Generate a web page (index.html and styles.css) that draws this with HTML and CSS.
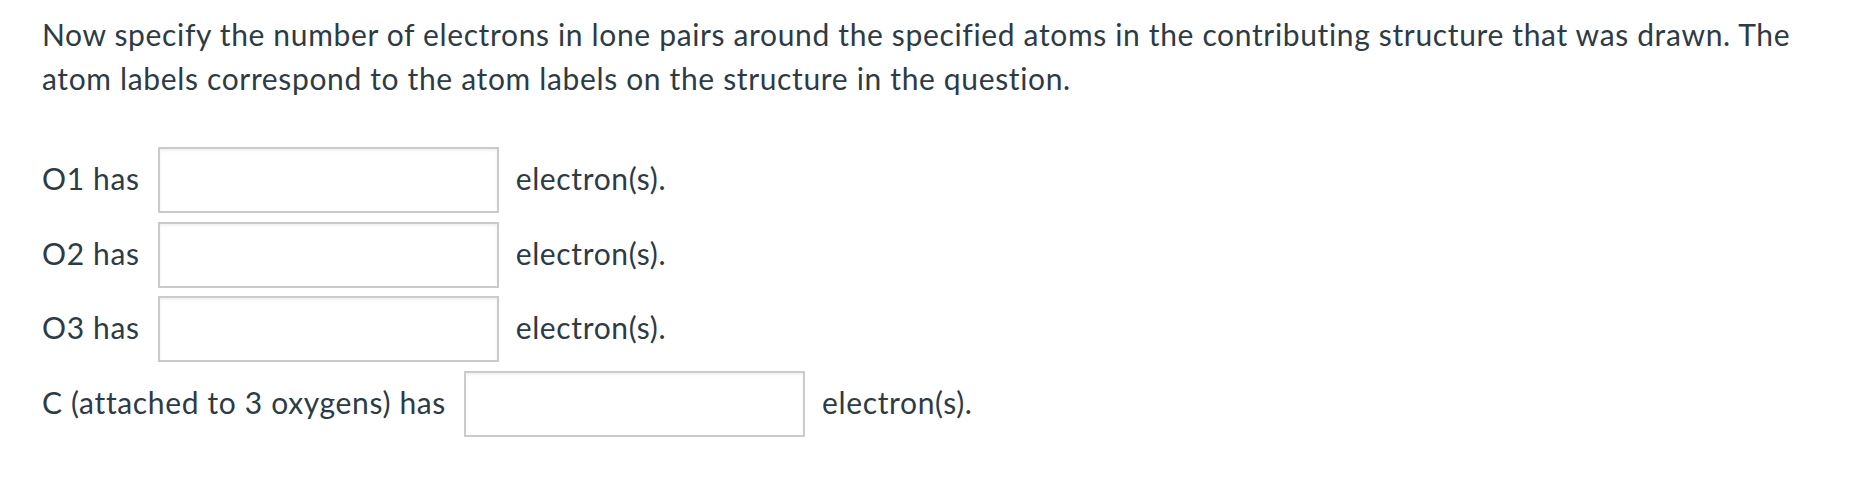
FILE: index.html
```html
<!DOCTYPE html>
<html lang="en">
<head>
<meta charset="utf-8">
<title>Lone pairs</title>
<link rel="stylesheet" href="styles.css">
</head>
<body>
<div class="question">
  <p class="prompt">Now specify the number of electrons in lone pairs around the specified atoms in the contributing structure that was drawn. The atom labels correspond to the atom labels on the structure in the question.</p>
  <div class="rows">
    <div class="row"><span class="label">O1 has</span><input class="answer" type="text"><span class="unit">electron(s).</span></div>
    <div class="row"><span class="label">O2 has</span><input class="answer" type="text"><span class="unit">electron(s).</span></div>
    <div class="row"><span class="label">O3 has</span><input class="answer" type="text"><span class="unit">electron(s).</span></div>
    <div class="row"><span class="label">C (attached to 3 oxygens) has</span><input class="answer" type="text"><span class="unit">electron(s).</span></div>
  </div>
</div>
</body>
</html>
```

FILE: styles.css
```css
html, body {
  margin: 0;
  padding: 0;
  background: #ffffff;
}
body {
  font-family: Lato, "Open Sans", "Liberation Sans", sans-serif;
  font-size: 30px;
  letter-spacing: 0.65px;
  line-height: 44px;
  color: #2d3b45;
}
.question {
  padding: 12px 40px 0 42px;
}
.prompt {
  margin: 0;
  max-width: 1775px;
}
.rows {
  margin-top: 47px;
  display: flex;
  flex-direction: column;
  gap: 8.7px;
}
.row {
  display: flex;
  align-items: center;
}
.label {
  position: relative;
  top: -2px;
}
.unit {
  position: relative;
  top: -2px;
}
.answer {
  box-sizing: border-box;
  width: 341px;
  height: 66px;
  margin: 0 17px 0 18px;
  border: 2px solid #cbcbcb;
  border-radius: 0;
  background: #ffffff;
  box-shadow: inset 0 2px 3px rgba(0, 0, 0, 0.06);
  font: inherit;
  padding: 0 10px;
  outline: none;
}
```
